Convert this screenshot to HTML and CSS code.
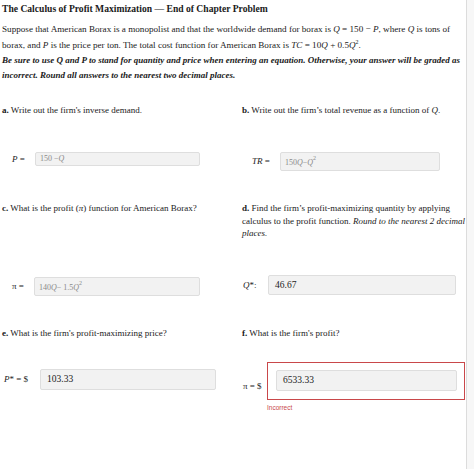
FILE: index.html
```html
<!DOCTYPE html>
<html>
<head>
<meta charset="utf-8">
<link rel="stylesheet" href="styles.css">
</head>
<body>
<div class="page">
  <h1 class="title">The Calculus of Profit Maximization — End of Chapter Problem</h1>
  <p class="intro">Suppose that American Borax is a monopolist and that the worldwide demand for borax is <i>Q</i> = 150 − <i>P</i>, where <i>Q</i> is tons of borax, and <i>P</i> is the price per ton. The total cost function for American Borax is <i>TC</i> = 10<i>Q</i> + 0.5<i>Q</i><sup>2</sup>.</p>
  <p class="note">Be sure to use Q and P to stand for quantity and price when entering an equation. Otherwise, your answer will be graded as incorrect. Round all answers to the nearest two decimal places.</p>

  <div class="grid">
    <div class="cell row1">
      <p class="q"><b>a.</b> Write out the firm's inverse demand.</p>
      <div class="answer ans-a">
        <span class="label"><i>P</i> =</span>
        <span class="box box-a faded">150 − <i>Q</i></span>
      </div>
    </div>
    <div class="cell row1">
      <p class="q"><b>b.</b> Write out the firm’s total revenue as a function of <i>Q</i>.</p>
      <div class="answer ans-b">
        <span class="label"><i>TR</i> =</span>
        <span class="box box-b faded">150<i>Q</i> − <i>Q</i><sup>2</sup></span>
      </div>
    </div>

    <div class="cell row2">
      <p class="q"><b>c.</b> What is the profit (<i>π</i>) function for American Borax?</p>
      <div class="answer ans-c">
        <span class="label">π =</span>
        <span class="box box-c faded">140<i>Q</i> − 1.5<i>Q</i><sup>2</sup></span>
      </div>
    </div>
    <div class="cell row2">
      <p class="q q-multi"><b>d.</b> Find the firm’s profit-maximizing quantity by applying calculus to the profit function. <i>Round to the nearest 2 decimal places.</i></p>
      <div class="answer ans-d">
        <span class="label"><i>Q</i>*:</span>
        <span class="box box-d">46.67</span>
      </div>
    </div>

    <div class="cell row3">
      <p class="q"><b>e.</b> What is the firm's profit-maximizing price?</p>
      <div class="answer ans-e">
        <span class="label"><i>P</i>* = $</span>
        <span class="box box-e">103.33</span>
      </div>
    </div>
    <div class="cell row3">
      <p class="q"><b>f.</b> What is the firm's profit?</p>
      <div class="answer ans-f">
        <span class="label">π = $</span>
        <div class="wrong">
          <div class="wrong-frame"><span class="box box-f">6533.33</span></div>
          <span class="incorrect">Incorrect</span>
        </div>
      </div>
    </div>
  </div>
</div>
</body>
</html>
```

FILE: styles.css
```css
html, body {
  margin: 0;
  padding: 0;
  background: #f7f7f7;
}
body {
  font-family: "Liberation Serif", "Times New Roman", serif;
  color: #1a1a1a;
}
.page {
  width: 467px;
  height: 469px;
  background: #fff;
  border-right: 1px solid #dcdcdc;
  box-sizing: border-box;
  padding: 0 0 0 2px;
  overflow: hidden;
}
.title {
  font-size: 9.6px;
  font-weight: bold;
  margin: 0;
  padding-top: 2px;
  line-height: 14px;
}
.intro {
  font-size: 9.15px;
  line-height: 16px;
  margin: 5px 0 0;
}
.intro sup {
  font-size: 0.65em;
  line-height: 0;
}
.note {
  font-size: 9px;
  line-height: 15px;
  font-weight: bold;
  font-style: italic;
  margin: 0;
}
.grid {
  display: grid;
  grid-template-columns: 240px 1fr;
  grid-template-rows: 98px 125px 150px;
  margin-top: 21px;
}
.cell {
  display: flex;
  flex-direction: column;
}
.q {
  font-size: 9px;
  line-height: 12.5px;
  margin: 0;
}
.answer {
  display: flex;
  align-items: center;
  font-size: 9px;
}
.label {
  white-space: nowrap;
}
.box {
  display: flex;
  align-items: center;
  box-sizing: border-box;
  background: #f2f2f2;
  border: 1px solid #dedede;
  border-radius: 2px;
  padding: 0 6px;
  font-size: 9.5px;
  color: #222;
}
.faded {
  color: #8a8a8a;
  font-size: 8px;
  padding: 0 4px;
}
.box sup {
  font-size: 6px;
  line-height: 0;
  align-self: flex-start;
  margin-top: 2px;
}
.ans-a { margin-top: 35px; padding-left: 10px; }
.ans-a .label { width: 23px; }
.box-a { width: 165px; height: 14px; }

.ans-b { margin-top: 35px; padding-left: 10px; }
.ans-b .label { width: 28px; }
.box-b { width: 160px; height: 19px; padding-top: 3px; }

.ans-c { margin-top: 62px; padding-left: 10px; }
.ans-c .label { width: 22px; }
.box-c { width: 166px; height: 19px; padding-top: 3px; }

.ans-d { margin-top: 35px; padding-left: 1px; }
.ans-d .label { width: 25px; }
.box-d { width: 188px; height: 20px; }

.ans-e { margin-top: 29px; padding-left: 2px; }
.ans-e .label { width: 36px; }
.box-e { width: 176px; height: 21px; }

.ans-f { margin-top: 22px; padding-left: 1px; align-items: flex-start; }
.ans-f .label { width: 24px; margin-top: 19px; }
.wrong {
  display: flex;
  flex-direction: column;
}
.wrong-frame {
  width: 198px;
  height: 38px;
  box-sizing: border-box;
  border: 1px solid #c9474a;
  padding: 7px 8px;
}
.box-f { width: 181px; height: 21px; }
.incorrect {
  font-family: "Liberation Sans", Arial, sans-serif;
  font-size: 6.5px;
  color: #c9474a;
  margin-top: 4px;
}
```
